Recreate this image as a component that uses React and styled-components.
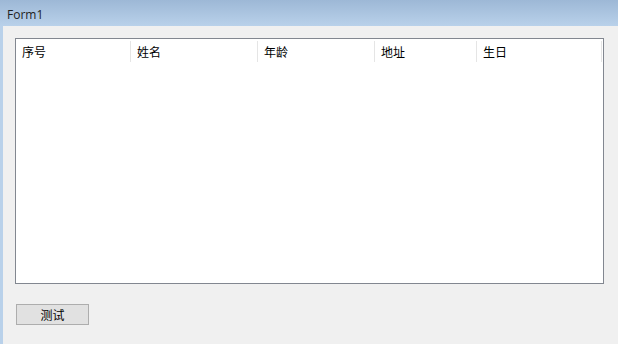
import React from 'react';
import styled, { createGlobalStyle } from 'styled-components';

const Global = createGlobalStyle`
  html, body { margin: 0; padding: 0; background: #f0f0f0; }
  body { font-family: "Noto Sans CJK SC", "Liberation Sans", sans-serif; }
`;

const Window = styled.div`
  width: 618px;
  height: 344px;
  display: flex;
  flex-direction: column;
  overflow: hidden;
`;

const TitleBar = styled.div`
  height: 26px;
  flex: none;
  display: flex;
  align-items: center;
  padding-left: 7px;
  padding-top: 3px;
  background: linear-gradient(#9db8d6, #b9d1ea);
  font-family: "Open Sans", "Liberation Sans", sans-serif;
  font-size: 12px;
  color: #1e1e1e;
  box-sizing: border-box;
`;

const Frame = styled.div`
  flex: 1;
  display: flex;
`;

const LeftEdge = styled.div`
  width: 3px;
  background: #b9d1ea;
`;

const Client = styled.div`
  flex: 1;
  background: #f0f0f0;
  padding: 12px 0 0 12px;
  display: flex;
  flex-direction: column;
  align-items: flex-start;
`;

const ListView = styled.div`
  width: 589px;
  height: 246px;
  box-sizing: border-box;
  border: 1px solid #828790;
  background: #fff;
`;

const Header = styled.div`
  display: flex;
  height: 25px;
`;

const HeaderCell = styled.div`
  width: ${p => p.$w}px;
  box-sizing: border-box;
  padding-left: 6px;
  display: flex;
  align-items: center;
  font-size: 12px;
  color: #000;
  border-right: 1px solid #e5e5e5;
  margin-top: 2px;
  margin-bottom: 2px;
`;

const Button = styled.button`
  margin-top: 20px;
  margin-left: 1px;
  width: 73px;
  height: 21px;
  box-sizing: border-box;
  border: 1px solid #adadad;
  background: #e1e1e1;
  font-family: "Noto Sans CJK SC", sans-serif;
  font-size: 12px;
  color: #000;
  padding: 0;
  display: flex;
  align-items: center;
  justify-content: center;
`;

const columns = [
  { title: '序号', w: 115 },
  { title: '姓名', w: 127 },
  { title: '年龄', w: 117 },
  { title: '地址', w: 102 },
  { title: '生日', w: 125 },
];

export default function App() {
  return (
    <>
      <Global />
      <Window>
        <TitleBar>Form1</TitleBar>
        <Frame>
          <LeftEdge />
          <Client>
            <ListView>
              <Header>
                {columns.map(c => (
                  <HeaderCell key={c.title} $w={c.w}>{c.title}</HeaderCell>
                ))}
              </Header>
            </ListView>
            <Button>测试</Button>
          </Client>
        </Frame>
      </Window>
    </>
  );
}
